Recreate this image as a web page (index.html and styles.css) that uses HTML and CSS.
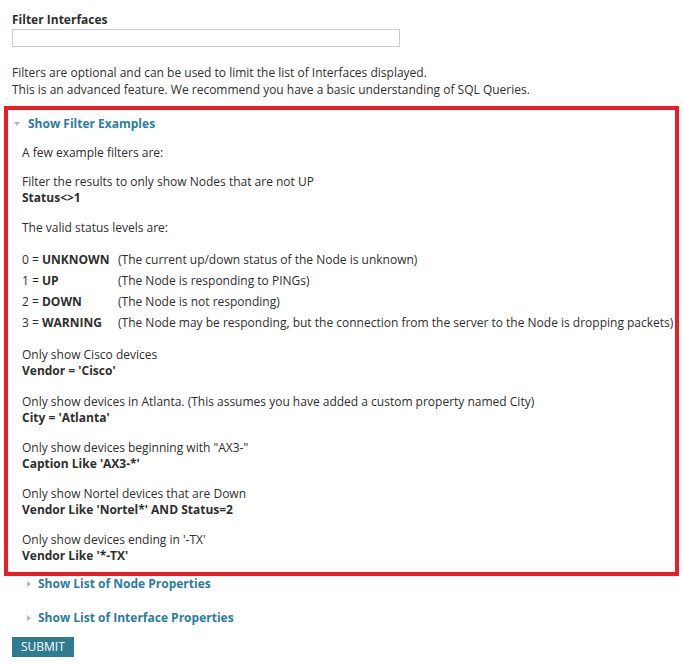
FILE: index.html
```html
<!DOCTYPE html>
<html>
<head>
<meta charset="utf-8">
<link rel="stylesheet" href="styles.css">
</head>
<body>
<div class="page">
  <div class="field-label">Filter Interfaces</div>
  <input class="filter-input" type="text">
  <p class="intro">Filters are optional and can be used to limit the list of Interfaces displayed.<br>This is an advanced feature. We recommend you have a basic understanding of SQL Queries.</p>

  <div class="examples">
    <div class="toggle open"><span class="tri-down"></span><span class="toggle-text">Show Filter Examples</span></div>
    <div class="ex-body">
      <p class="first">A few example filters are:</p>
      <p class="second">Filter the results to only show Nodes that are not UP<br><b>Status&lt;&gt;1</b></p>
      <p>The valid status levels are:</p>
      <div class="levels">
        <div class="lv-key">0 = <b>UNKNOWN</b></div><div class="lv-desc">(The current up/down status of the Node is unknown)</div>
        <div class="lv-key">1 = <b>UP</b></div><div class="lv-desc">(The Node is responding to PINGs)</div>
        <div class="lv-key">2 = <b>DOWN</b></div><div class="lv-desc">(The Node is not responding)</div>
        <div class="lv-key">3 = <b>WARNING</b></div><div class="lv-desc">(The Node may be responding, but the connection from the server to the Node is dropping packets)</div>
      </div>
      <p>Only show Cisco devices<br><b>Vendor = 'Cisco'</b></p>
      <p>Only show devices in Atlanta. (This assumes you have added a custom property named City)<br><b>City = 'Atlanta'</b></p>
      <p>Only show devices beginning with "AX3-"<br><b>Caption Like 'AX3-*'</b></p>
      <p>Only show Nortel devices that are Down<br><b>Vendor Like 'Nortel*' AND Status=2</b></p>
      <p class="last">Only show devices ending in '-TX'<br><b>Vendor Like '*-TX'</b></p>
    </div>
  </div>

  <div class="toggle closed"><span class="tri-right"></span><span class="toggle-text">Show List of Node Properties</span></div>
  <div class="toggle closed next"><span class="tri-right"></span><span class="toggle-text">Show List of Interface Properties</span></div>

  <button class="submit" type="button">SUBMIT</button>
</div>
</body>
</html>
```

FILE: styles.css
```css
html, body {
  margin: 0;
  padding: 0;
  background: #fff;
}
body {
  font-family: "Open Sans", "Liberation Sans", sans-serif;
  font-size: 12px;
  line-height: 16px;
  color: #2e2e2e;
}
.page {
  padding: 12px 0 0 12px;
}
.field-label {
  font-weight: bold;
  font-size: 12px;
  line-height: 16px;
}
.filter-input {
  display: block;
  box-sizing: border-box;
  width: 388px;
  height: 18px;
  margin: 1px 0 0 0;
  padding: 0 3px;
  border: 1px solid #ccc;
  background: #fff;
  font: inherit;
}
.intro {
  margin: 17px 0 0 0;
  line-height: 17px;
}
.examples {
  margin: 8px 0 0 -8px;
  width: 675px;
  box-sizing: border-box;
  border: 4px solid #ed1c24;
  padding: 6px 0 8px 0;
}
.toggle {
  display: flex;
  align-items: center;
  color: #2b7ba3;
  font-weight: bold;
  font-size: 12px;
  line-height: 16px;
}
.toggle.open {
  padding-left: 6px;
  gap: 8px;
}
.tri-down {
  width: 0;
  height: 0;
  border-left: 3px solid transparent;
  border-right: 3px solid transparent;
  border-top: 4px solid #b5b5b5;
}
.tri-right {
  width: 0;
  height: 0;
  border-top: 3px solid transparent;
  border-bottom: 3px solid transparent;
  border-left: 4px solid #b5b5b5;
}
.ex-body {
  padding: 0 0 0 14px;
}
.ex-body p {
  margin: 14.25px 0 0 0;
}
.ex-body p.first {
  margin-top: 13px;
}
.ex-body p.second {
  margin-top: 13px;
}
.levels {
  display: grid;
  grid-template-columns: 96px auto;
  row-gap: 5px;
  margin-top: 16px;
  white-space: nowrap;
}
.levels + p {
  margin-top: 16px;
}
.toggle.closed {
  margin-top: 0;
  padding-left: 15px;
  gap: 7px;
}
.toggle.closed.next {
  margin-top: 18px;
}
.submit {
  display: block;
  margin-top: 11px;
  height: 20px;
  padding: 0 9px;
  border: none;
  background: #2e7b92;
  color: #fff;
  font-family: "Open Sans", "Liberation Sans", sans-serif;
  font-size: 12px;
  line-height: 20px;
}
```
